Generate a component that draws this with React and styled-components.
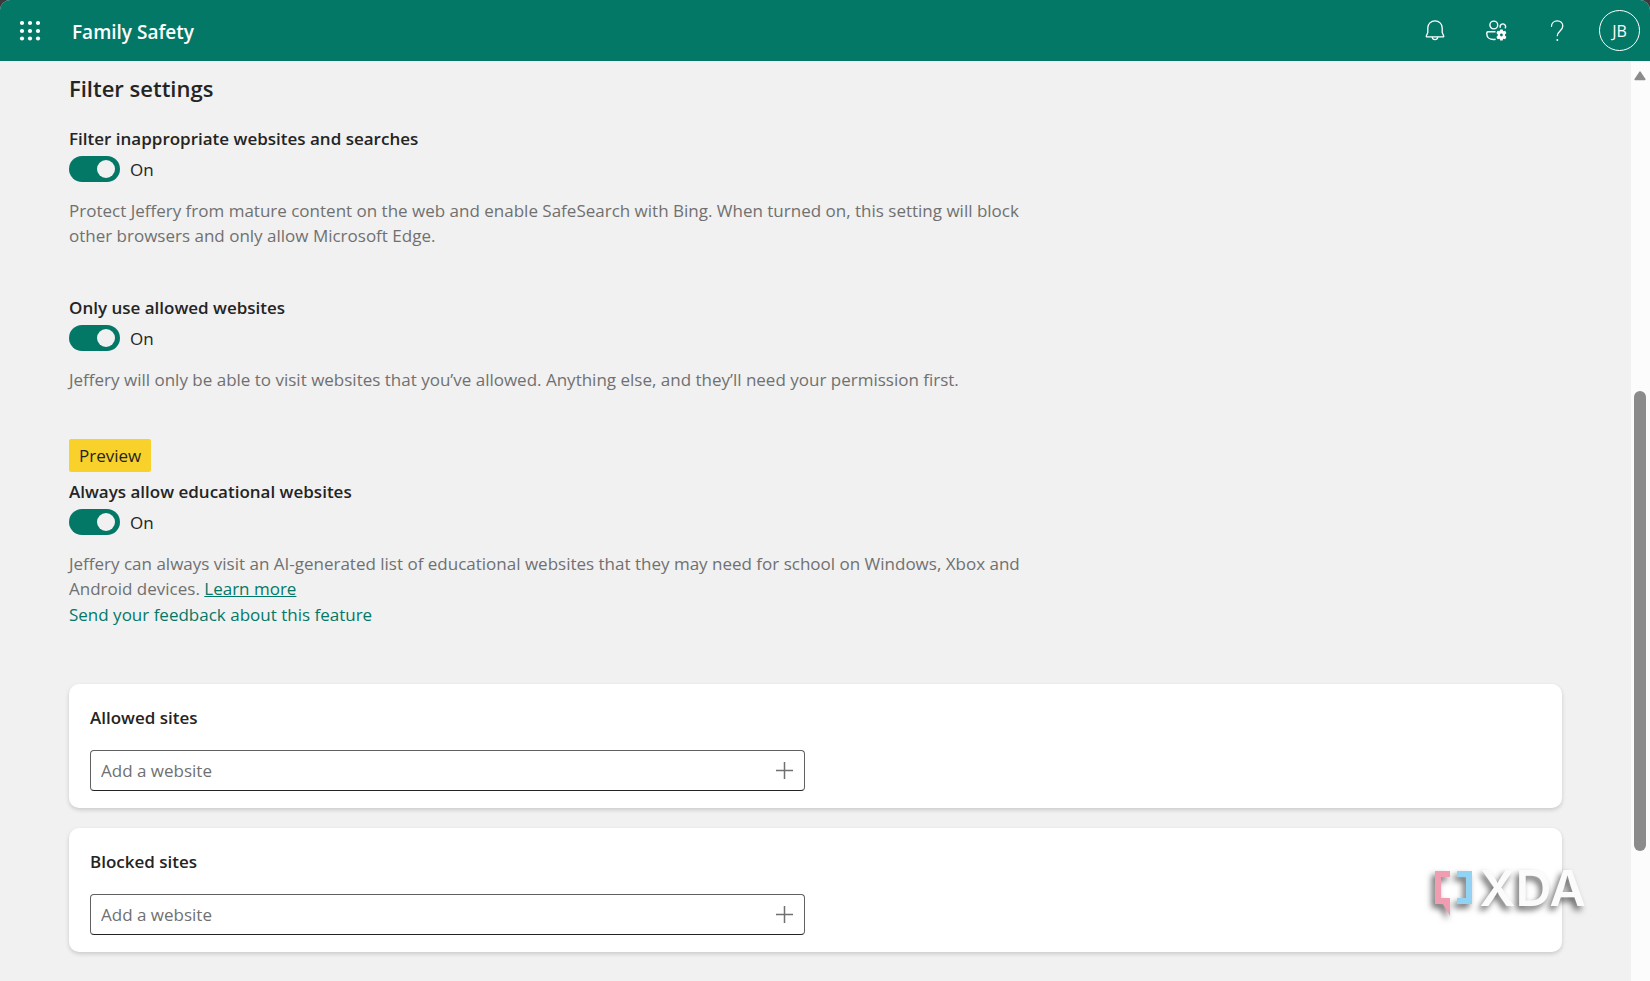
import { useState } from 'react'
import styled, { createGlobalStyle } from 'styled-components'

const SETTINGS = [
  {
    id: 'filter-searches',
    title: 'Filter inappropriate websites and searches',
    text: 'Protect Jeffery from mature content on the web and enable SafeSearch with Bing. When turned on, this setting will block other browsers and only allow Microsoft Edge.'
  },
  {
    id: 'only-allowed',
    title: 'Only use allowed websites',
    text: 'Jeffery will only be able to visit websites that you’ve allowed. Anything else, and they’ll need your permission first.'
  },
  {
    id: 'educational',
    title: 'Always allow educational websites',
    badge: 'Preview',
    text: 'Jeffery can always visit an AI-generated list of educational websites that they may need for school on Windows, Xbox and Android devices.',
    more: 'Learn more',
    feedback: 'Send your feedback about this feature'
  }
]

const LISTS = [
  { id: 'allowed', title: 'Allowed sites' },
  { id: 'blocked', title: 'Blocked sites' }
]

export default function App () {
  return (
    <>
      <GlobalStyle />
      <Window>
        <Header />
        <Body>
          <Content>
            <PageTitle>Filter settings</PageTitle>
            {SETTINGS.map((s) => (
              <Setting key={s.id} {...s} />
            ))}
            <Cards>
              {LISTS.map((l) => (
                <SiteCard key={l.id} {...l} />
              ))}
            </Cards>
          </Content>
          <ScrollTrack aria-hidden="true">
            <svg width="12" height="10" viewBox="0 0 12 10">
              <path d="M6 1.2 10.8 8.4H1.2Z" fill="#8b8b8b" stroke="#8b8b8b" strokeWidth="1.6" strokeLinejoin="round" />
            </svg>
            <TrackSpace $size={310} />
            <Thumb />
            <TrackSpace $size={130} />
          </ScrollTrack>
        </Body>
        <Watermark />
      </Window>
    </>
  )
}

function Header () {
  return (
    <Bar>
      <IconButton type="button" aria-label="App launcher">
        <svg width="22" height="22" viewBox="0 0 22 22" fill="#fff">
          {[3, 11, 18.5].map((y) =>
            [3, 11, 19].map((x) => <circle key={x + '-' + y} cx={x} cy={y} r="2.1" />)
          )}
        </svg>
      </IconButton>
      <AppName>Family Safety</AppName>
      <Actions>
        <IconButton type="button" aria-label="Notifications">
          <svg width="22" height="22" viewBox="0 0 22 22" fill="none" stroke="#fff" strokeWidth="1.3" strokeLinejoin="round">
            <path d="M11 .9c-4 0-7.200 3-7.200 6.900v4.700L2.300 16c-.2.500.1.900.6.900h16.200c.5 0 .8-.4.6-.9l-1.500-3.500V7.800C18.200 3.900 15 .9 11 .9Z" />
            <path d="M8.200 17c.2 1.500 1.300 2.700 2.800 2.700s2.600-1.200 2.800-2.700" />
          </svg>
        </IconButton>
        <IconButton type="button" aria-label="Family settings">
          <PeopleGear />
        </IconButton>
        <IconButton type="button" aria-label="Help">
          <svg width="22" height="22" viewBox="0 0 22 22" fill="none" stroke="#fff" strokeWidth="1.3" strokeLinecap="round">
            <path d="M5.500 6.300C5.500 3 8 .9 11.200.9s5.600 2.100 5.600 5.200c0 4.600-5.500 5-5.500 9.600" />
            <circle cx="11.300" cy="20" r="1" fill="#fff" stroke="none" />
          </svg>
        </IconButton>
        <Avatar type="button" aria-label="Account JB">JB</Avatar>
      </Actions>
    </Bar>
  )
}

function PeopleGear () {
  return (
    <svg width="22" height="22" viewBox="0 0 22 22" fill="none" stroke="#fff" strokeWidth="1.4">
      <circle cx="8.800" cy="5" r="3.900" />
      <path d="M15.400 7.800A2.700 2.700 0 1 1 20 8.300" />
      <path d="M10.500 11.700H3.100c-.8 0-1.300.5-1.300 1.300v.9c0 3.400 3 5.600 6.700 5.600 .8 0 1.500-.1 2.100-.2" />
      <path
        fill="#fff"
        stroke="none"
        fillRule="evenodd"
        d="M15.200 9.400h2.400l.6 1.900 2-.5 1.200 2.100-1.400 1.500v1.200l1.400 1.500-1.200 2.100-2-.5-.6 1.900h-2.400l-.6-1.900-2 .5-1.200-2.100 1.400-1.500v-1.200l-1.400-1.500 1.200-2.100 2 .5Zm1.200 4.200a1.400 1.400 0 1 0 0 2.800 1.400 1.400 0 0 0 0-2.800Z"
      />
    </svg>
  )
}

function Setting ({ id, title, badge, text, more, feedback }) {
  const [on, setOn] = useState(true)

  return (
    <Section>
      {badge && <Badge>{badge}</Badge>}
      <SettingTitle htmlFor={id}>{title}</SettingTitle>
      <ToggleRow>
        <Toggle id={id} type="checkbox" role="switch" checked={on} onChange={() => setOn(!on)} />
        <span>{on ? 'On' : 'Off'}</span>
      </ToggleRow>
      <Description>
        {text} {more && <Link href="#" $underline>{more}</Link>}
      </Description>
      {feedback && <Link href="#">{feedback}</Link>}
    </Section>
  )
}

function SiteCard ({ id, title }) {
  return (
    <Card>
      <CardTitle htmlFor={id}>{title}</CardTitle>
      <Field>
        <FieldInput id={id} type="text" placeholder="Add a website" />
        <AddButton type="button" aria-label={'Add to ' + title}>
          <svg width="17" height="17" viewBox="0 0 17 17" stroke="#707070" strokeWidth="1.5">
            <path d="M8.500 0v17M0 8.500h17" />
          </svg>
        </AddButton>
      </Field>
    </Card>
  )
}

function Watermark () {
  return (
    <Mark>
      <svg width="38" height="46" viewBox="0 0 38 46">
        <path d="M0 0h15v6H6v21h9v18L8 33H0Z" fill="#f19db1" />
        <path d="M22 0h15v33H22v-6h9V6h-9Z" fill="#92d2f3" />
      </svg>
      <span>XDA</span>
    </Mark>
  )
}

const GlobalStyle = createGlobalStyle`
  * {
    box-sizing: border-box;
  }
  body {
    margin: 0;
    background-color: #3b3b3b;
    color: #242424;
    font-family: 'Open Sans', 'Noto Sans', sans-serif;
    font-size: 17px;
    line-height: 25px;
  }
  button,
  input {
    font: inherit;
  }
`

const Window = styled.div`
  position: relative;
  display: flex;
  flex-direction: column;
  min-height: 100vh;
  border-radius: 10px 10px 0 0;
  overflow: hidden;
  background-color: #f1f1f1;
`

const Bar = styled.header`
  display: flex;
  align-items: center;
  height: 61px;
  padding: 0 10px 0 19px;
  background-color: #047867;
  color: #ffffff;
`

const IconButton = styled.button`
  display: flex;
  padding: 0;
  border: 0;
  background: none;
  cursor: pointer;
`

const AppName = styled.span`
  padding-top: 4px;
  margin-left: 31px;
  font-size: 19px;
  font-weight: 600;
`

const Actions = styled.div`
  display: flex;
  align-items: center;
  gap: 39px;
  margin-left: auto;
`

const Avatar = styled.button`
  width: 41px;
  height: 41px;
  margin-left: -8px;
  padding: 2px 0 0;
  border: 1px solid #ffffff;
  border-radius: 50%;
  background: none;
  color: #ffffff;
  font-size: 16px;
`

const Body = styled.div`
  display: flex;
  flex: 1;
`

const Content = styled.main`
  flex: 1;
  padding: 12px 69px 29px;
`

const PageTitle = styled.h1`
  margin: 0 0 23px;
  font-size: 22px;
  font-weight: 600;
  line-height: 30px;
`

const Section = styled.section`
  max-width: 960px;
  margin-bottom: 47px;
`

const Badge = styled.div`
  width: fit-content;
  margin-bottom: 7px;
  padding: 4px 10px;
  border-radius: 2px;
  background-color: #f8d22a;
`

const SettingTitle = styled.label`
  display: block;
  font-weight: 600;
`

const ToggleRow = styled.div`
  display: flex;
  align-items: center;
  gap: 10px;
  height: 26px;
  margin: 5px 0 16px;
`

const Toggle = styled.input`
  appearance: none;
  display: flex;
  align-items: center;
  width: 51px;
  height: 26px;
  margin: 0;
  padding: 0 5px;
  border-radius: 13px;
  background-color: ${(props) => (props.checked ? '#047867' : '#8a8a8a')};
  justify-content: ${(props) => (props.checked ? 'flex-end' : 'flex-start')};
  cursor: pointer;

  &::before {
    content: '';
    width: 18px;
    height: 18px;
    border-radius: 50%;
    background-color: #f1f1f1;
  }
`

const Description = styled.p`
  margin: 0 0 1px;
  color: #707070;
`

const Link = styled.a`
  color: #047867;
  text-decoration: ${(props) => (props.$underline ? 'underline' : 'none')};
`

const Cards = styled.div`
  display: flex;
  flex-direction: column;
  gap: 20px;
  padding-top: 10px;
`

const Card = styled.section`
  padding: 21px 21px 17px;
  border-radius: 10px;
  background-color: #ffffff;
  box-shadow: 0 2px 4px rgba(0, 0, 0, 0.16);
`

const CardTitle = styled.label`
  display: block;
  margin-bottom: 20px;
  font-weight: 600;
`

const Field = styled.div`
  display: flex;
  align-items: center;
  max-width: 715px;
  height: 41px;
  padding: 0 11px 0 10px;
  border: 1px solid #616161;
  border-bottom-color: #242424;
  border-radius: 4px;
`

const FieldInput = styled.input`
  flex: 1;
  padding: 0;
  border: 0;
  outline: 0;
  background: none;

  &::placeholder {
    color: #707070;
    opacity: 1;
  }
`

const AddButton = styled(IconButton)`
  width: 17px;
`

const ScrollTrack = styled.div`
  display: flex;
  flex-direction: column;
  align-items: center;
  width: 19px;
  padding: 10px 1px 0 0;
  background-color: #fcfcfc;
`

const TrackSpace = styled.div`
  flex: ${(props) => props.$size};
`

const Thumb = styled.div`
  flex: 461;
  width: 12px;
  border-radius: 6px;
  background-color: #8b8b8b;
`

const Mark = styled.div`
  position: absolute;
  right: 64px;
  bottom: 64px;
  display: flex;
  justify-content: space-between;
  width: 151px;
  color: #fbfbfb;
  font-family: Inter, sans-serif;
  font-size: 50px;
  font-weight: 600;
  line-height: 34px;
  filter: drop-shadow(-3px 4px 3px rgba(0, 0, 0, 0.6));
`
